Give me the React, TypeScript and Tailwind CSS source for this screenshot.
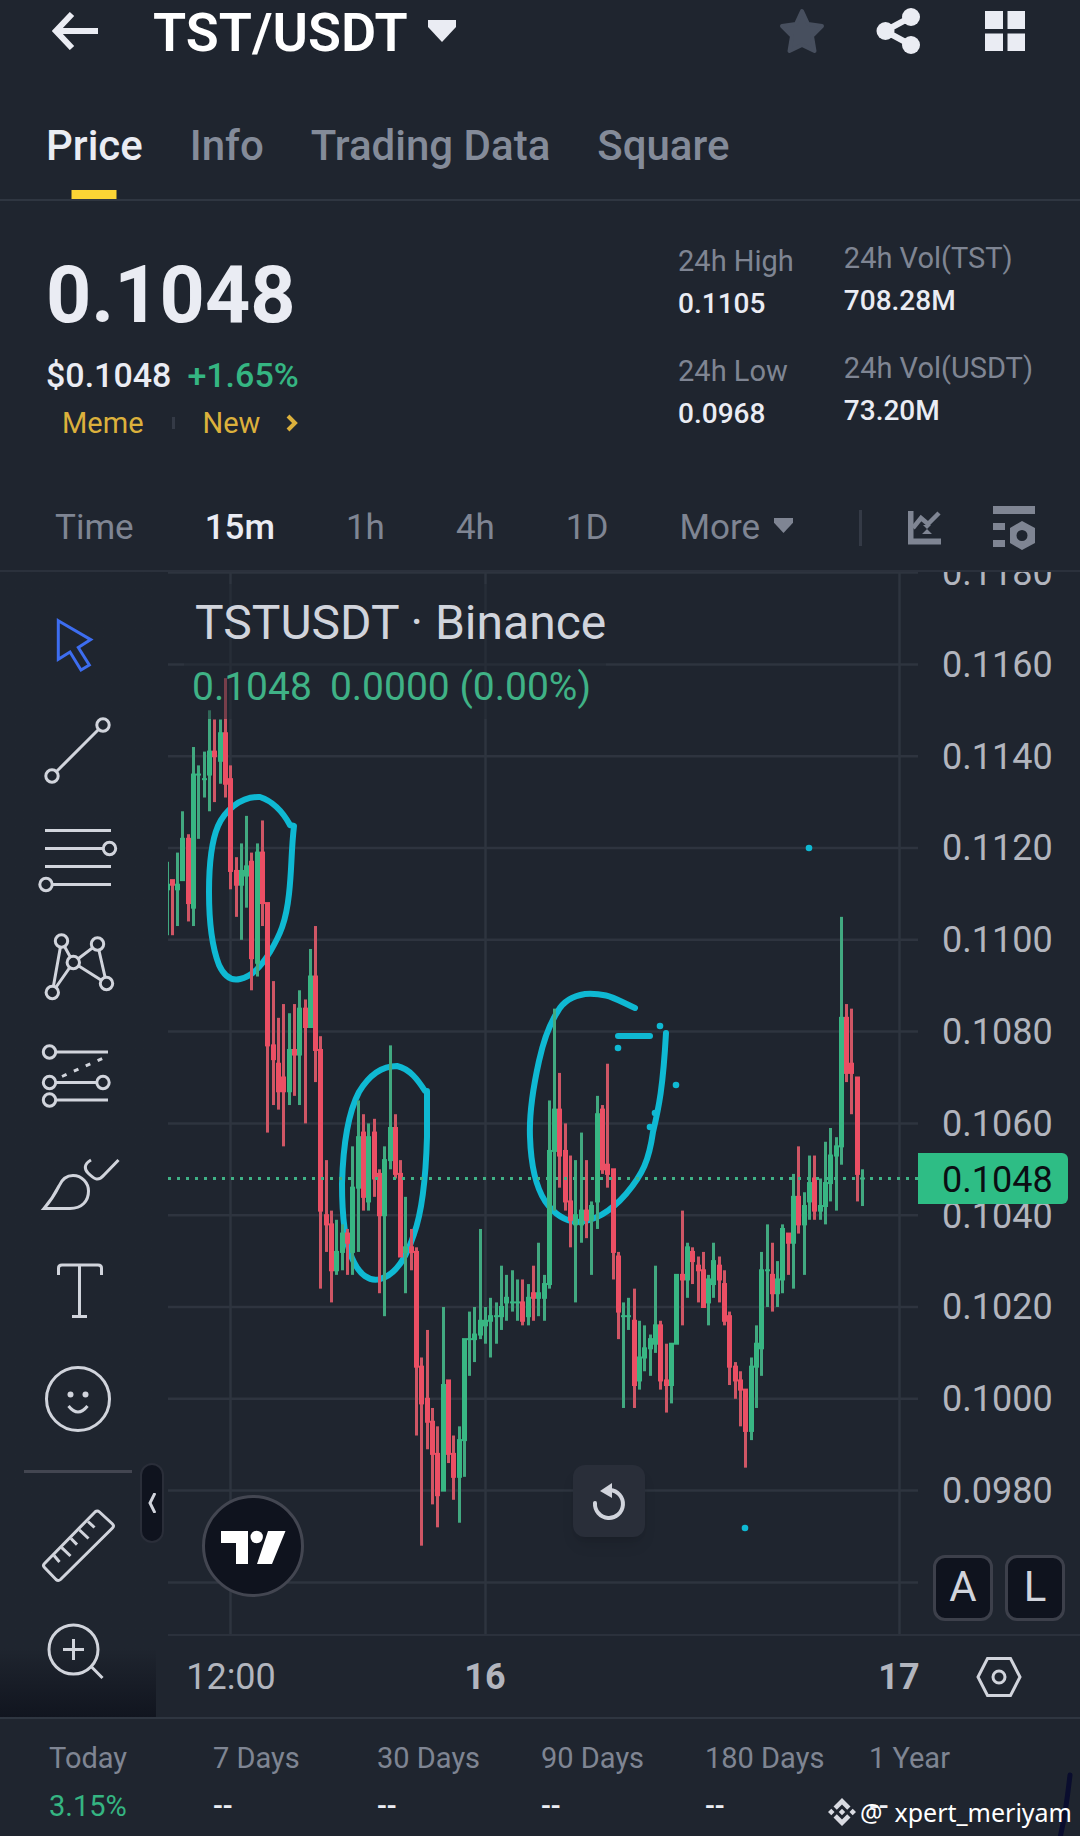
import { useState, type ReactNode } from "react";
import clsx from "clsx";

type Direction = "up" | "down";

// high, body top, body bottom, low (all in ticks of 0.0001)
type Candle = [Direction, number, number, number, number];

const CANDLES: Candle[] = [
  ["up", 1117, 1112, 1111, 1101],
  ["down", 1113, 1113, 1112, 1101],
  ["up", 1119, 1112, 1111, 1103],
  ["up", 1128, 1122, 1113, 1113],
  ["down", 1123, 1122, 1108, 1104],
  ["up", 1142, 1136, 1107, 1103],
  ["up", 1138, 1136, 1136, 1122],
  ["up", 1141, 1135, 1135, 1131],
  ["up", 1150, 1141, 1136, 1128],
  ["down", 1148, 1141, 1140, 1130],
  ["up", 1148, 1145, 1139, 1134],
  ["down", 1157, 1145, 1134, 1131],
  ["down", 1138, 1135, 1115, 1111],
  ["down", 1118, 1115, 1112, 1105],
  ["up", 1121, 1115, 1112, 1100],
  ["up", 1127, 1116, 1114, 1107],
  ["down", 1119, 1117, 1096, 1089],
  ["up", 1121, 1119, 1095, 1092],
  ["down", 1126, 1119, 1108, 1103],
  ["down", 1108, 1108, 1077, 1058],
  ["down", 1091, 1077, 1074, 1064],
  ["down", 1083, 1073, 1067, 1063],
  ["down", 1086, 1070, 1067, 1055],
  ["up", 1084, 1076, 1067, 1064],
  ["down", 1086, 1076, 1075, 1066],
  ["up", 1089, 1085, 1075, 1064],
  ["down", 1087, 1085, 1081, 1060],
  ["up", 1098, 1092, 1081, 1081],
  ["down", 1103, 1092, 1076, 1069],
  ["down", 1079, 1076, 1041, 1024],
  ["down", 1052, 1040, 1038, 1032],
  ["down", 1041, 1038, 1028, 1021],
  ["up", 1039, 1032, 1028, 1027],
  ["up", 1038, 1036, 1032, 1028],
  ["down", 1037, 1036, 1034, 1027],
  ["up", 1055, 1046, 1032, 1027],
  ["up", 1065, 1057, 1046, 1032],
  ["down", 1062, 1058, 1044, 1041],
  ["up", 1060, 1057, 1043, 1041],
  ["down", 1061, 1058, 1048, 1044],
  ["down", 1050, 1049, 1040, 1023],
  ["up", 1055, 1052, 1040, 1018],
  ["up", 1077, 1059, 1052, 1050],
  ["down", 1062, 1059, 1049, 1048],
  ["down", 1052, 1049, 1031, 1031],
  ["up", 1044, 1033, 1032, 1023],
  ["down", 1037, 1033, 1032, 1028],
  ["down", 1033, 1032, 1007, 992],
  ["down", 1009, 1007, 999, 968],
  ["down", 1015, 1000, 995, 989],
  ["down", 998, 995, 988, 977],
  ["down", 994, 988, 979, 972],
  ["up", 1020, 1003, 980, 980],
  ["down", 1004, 1004, 988, 986],
  ["down", 992, 988, 983, 978],
  ["up", 994, 991, 983, 973],
  ["up", 1013, 1013, 991, 983],
  ["up", 1019, 1013, 1013, 1005],
  ["up", 1020, 1014, 1013, 1008],
  ["up", 1037, 1017, 1014, 1013],
  ["up", 1020, 1017, 1016, 1012],
  ["up", 1022, 1018, 1017, 1009],
  ["up", 1021, 1018, 1018, 1012],
  ["up", 1029, 1020, 1018, 1015],
  ["up", 1027, 1022, 1021, 1017],
  ["up", 1028, 1021, 1021, 1019],
  ["up", 1026, 1021, 1021, 1017],
  ["down", 1026, 1021, 1017, 1016],
  ["up", 1025, 1022, 1018, 1016],
  ["down", 1029, 1023, 1022, 1017],
  ["up", 1034, 1023, 1022, 1018],
  ["up", 1027, 1025, 1022, 1017],
  ["up", 1065, 1054, 1025, 1024],
  ["up", 1085, 1063, 1054, 1041],
  ["down", 1071, 1063, 1053, 1046],
  ["down", 1060, 1054, 1043, 1041],
  ["down", 1053, 1043, 1039, 1033],
  ["up", 1052, 1040, 1038, 1021],
  ["up", 1058, 1041, 1038, 1034],
  ["down", 1052, 1041, 1039, 1035],
  ["up", 1043, 1042, 1039, 1027],
  ["up", 1066, 1062, 1043, 1037],
  ["down", 1064, 1063, 1050, 1049],
  ["down", 1073, 1051, 1049, 1046],
  ["down", 1050, 1050, 1032, 1026],
  ["down", 1032, 1031, 1019, 1013],
  ["up", 1021, 1018, 1018, 998],
  ["up", 1022, 1018, 1018, 1015],
  ["down", 1024, 1017, 1003, 998],
  ["up", 1017, 1009, 1004, 1002],
  ["up", 1016, 1011, 1009, 1006],
  ["up", 1014, 1013, 1011, 1005],
  ["up", 1029, 1016, 1012, 1010],
  ["down", 1017, 1016, 1004, 1002],
  ["down", 1012, 1004, 1003, 997],
  ["up", 1012, 1012, 1003, 999],
  ["up", 1027, 1027, 1012, 1012],
  ["down", 1041, 1027, 1026, 1016],
  ["up", 1034, 1033, 1026, 1022],
  ["down", 1033, 1032, 1030, 1025],
  ["down", 1031, 1029, 1028, 1021],
  ["down", 1032, 1028, 1020, 1020],
  ["up", 1027, 1026, 1021, 1016],
  ["up", 1034, 1030, 1025, 1022],
  ["down", 1031, 1029, 1026, 1021],
  ["down", 1028, 1025, 1017, 1016],
  ["down", 1019, 1018, 1007, 1003],
  ["down", 1008, 1007, 1004, 1000],
  ["down", 1006, 1004, 1002, 994],
  ["down", 1002, 1002, 993, 985],
  ["up", 1009, 1007, 993, 991],
  ["up", 1016, 1012, 1007, 998],
  ["up", 1032, 1028, 1011, 1005],
  ["up", 1038, 1028, 1028, 1020],
  ["down", 1034, 1027, 1023, 1019],
  ["up", 1030, 1026, 1023, 1020],
  ["up", 1038, 1037, 1026, 1023],
  ["down", 1036, 1036, 1034, 1027],
  ["up", 1049, 1044, 1034, 1024],
  ["down", 1055, 1044, 1038, 1036],
  ["up", 1045, 1042, 1038, 1027],
  ["up", 1053, 1047, 1043, 1039],
  ["down", 1053, 1048, 1041, 1039],
  ["up", 1048, 1042, 1041, 1039],
  ["up", 1056, 1047, 1042, 1038],
  ["up", 1059, 1053, 1047, 1043],
  ["up", 1057, 1055, 1053, 1041],
  ["up", 1105, 1083, 1055, 1051],
  ["down", 1086, 1083, 1071, 1069],
  ["down", 1085, 1073, 1071, 1062],
  ["down", 1070, 1070, 1049, 1043],
  ["up", 1050, 1048, 1048, 1042],
];

const PRICE_LABELS = [
  "0.1180", "0.1160", "0.1140", "0.1120", "0.1100", "0.1080",
  "0.1060", "0.1040", "0.1020", "0.1000", "0.0980",
];

const TABS = ["Price", "Info", "Trading Data", "Square"];
const INTERVALS = ["Time", "15m", "1h", "4h", "1D"];

const RETURNS = [
  { label: "Today", value: "3.15%" },
  { label: "7 Days", value: "--" },
  { label: "30 Days", value: "--" },
  { label: "90 Days", value: "--" },
  { label: "180 Days", value: "--" },
  { label: "1 Year", value: "--" },
];

const priceY = (ticks: number) => 276 + (1120 - ticks) * 4.59;
const candleX = (index: number) => -1.5 + index * 5.31;

function Caret({ className }: { className?: string }) {
  return (
    <svg viewBox="0 0 28 22" className={className} fill="currentColor" aria-hidden="true">
      <path d="M0 0H28V7L14 22L0 7Z" />
    </svg>
  );
}

function Header() {
  return (
    <header className="flex h-[62px] items-center pr-[55px] pl-[52px]">
      <button type="button" aria-label="Back" className="text-[#eaecf3]">
        <svg viewBox="0 0 46 38" className="h-[38px] w-[46px]" fill="none" stroke="currentColor" strokeWidth="6">
          <path d="M20 2L4 19L20 36M4 19H46" />
        </svg>
      </button>
      <button type="button" className="ml-[55px] flex items-center gap-[20px] text-white">
        <h1 className="pt-[4px] text-[54px] leading-[62px] font-semibold">TST/USDT</h1>
        <Caret className="h-[22px] w-[28px] text-[#eaecf3]" />
      </button>
      <div className="ml-auto flex items-center text-[#eaecf3]">
        <button type="button" aria-label="Favourite" className="text-[#474f5e]">
          <svg viewBox="0 0 46 46" className="h-[46px] w-[46px]" fill="currentColor" stroke="currentColor" strokeWidth="4" strokeLinejoin="round">
            <path d="M23 3L29 16L43 18L33 28L35.500 43L23 37L10.500 43L13 28L3 18L17 16Z" />
          </svg>
        </button>
        <button type="button" aria-label="Share" className="ml-[51px]">
          <svg viewBox="0 0 44 46" className="h-[46px] w-[44px]" fill="currentColor" stroke="currentColor">
            <path d="M9 23L35 9M9 23L35 37" strokeWidth="6" />
            <circle cx="9.500" cy="23" r="9" stroke="none" />
            <circle cx="35" cy="9" r="9" stroke="none" />
            <circle cx="35" cy="37" r="9" stroke="none" />
          </svg>
        </button>
        <button type="button" aria-label="Layout" className="ml-[65px]">
          <svg viewBox="0 0 40 40" className="h-[40px] w-[40px]" fill="currentColor">
            <path d="M0 0H18V18H0ZM22.500 0H40V18H22.500ZM0 22.500H18V40H0ZM22.500 22.500H40V40H22.500Z" />
          </svg>
        </button>
      </div>
    </header>
  );
}

function TabBar() {
  const [active, setActive] = useState("Price");
  return (
    <nav className="flex h-[139px] gap-[47px] border-b-2 border-[#2f3641] pl-[46px]">
      {TABS.map((tab) => (
        <button
          key={tab}
          type="button"
          onClick={() => setActive(tab)}
          className={clsx(
            "relative flex items-center pt-[30px] text-[42px] leading-[48px] font-medium",
            tab === active ? "text-[#eaecf3]" : "text-[#848b99]",
          )}
        >
          {tab}
          {tab === active && (
            <span className="absolute bottom-0 left-1/2 h-[9px] w-[45px] -translate-x-1/2 bg-[#fcd535]" />
          )}
        </button>
      ))}
    </nav>
  );
}

function Stat({ label, value }: { label: string; value: string }) {
  return (
    <div>
      <dt className="text-[29px] leading-[40px] text-[#7f8593]">{label}</dt>
      <dd className="mt-[3px] text-[28px] leading-[40px] font-medium text-[#eaecf3]">{value}</dd>
    </div>
  );
}

function Summary() {
  return (
    <section className="flex justify-between pr-[47px] pl-[46px]">
      <div className="pt-[54px] pb-[45px]">
        <div className="text-[79px] leading-[80px] font-bold text-[#eaecf3]">0.1048</div>
        <div className="mt-[20px] flex gap-[16px] text-[34px] leading-[40px] font-medium">
          <span className="text-[#eaecf3]">$0.1048</span>
          <span className="text-[#35b582]">+1.65%</span>
        </div>
        <div className="mt-[12px] flex items-center pl-[16px] text-[29px] leading-[32px] text-[#dcb13c]">
          <a href="#meme">Meme</a>
          <span className="mx-[28px] h-[12px] w-[3px] bg-[#343a46]" />
          <a href="#new" className="flex items-center gap-[26px]">
            New
            <svg viewBox="0 0 12 18" className="h-[18px] w-[12px]" fill="none" stroke="currentColor" strokeWidth="4">
              <path d="M2 2L9 9L2 16" />
            </svg>
          </a>
        </div>
      </div>
      <dl className="flex gap-[50px]">
        <div className="flex flex-col gap-[27px] pt-[40px]">
          <Stat label="24h High" value="0.1105" />
          <Stat label="24h Low" value="0.0968" />
        </div>
        <div className="flex flex-col gap-[27px] pt-[37px]">
          <Stat label="24h Vol(TST)" value="708.28M" />
          <Stat label="24h Vol(USDT)" value="73.20M" />
        </div>
      </dl>
    </section>
  );
}

function IntervalBar() {
  const [active, setActive] = useState("15m");
  return (
    <div className="flex h-[88px] items-center border-b-2 border-[#2b313c] pt-[2px] pr-[45px] pl-[55px] text-[35px] leading-[40px] text-[#7f8593]">
      <div className="flex gap-[71px]">
        {INTERVALS.map((interval) => (
          <button
            key={interval}
            type="button"
            onClick={() => setActive(interval)}
            className={clsx(interval === active && "font-medium text-[#eaecf3]")}
          >
            {interval}
          </button>
        ))}
        <button type="button" className="flex items-center gap-[14px]">
          More
          <Caret className="mb-[6px] h-[15px] w-[19px]" />
        </button>
      </div>
      <span className="ml-auto h-[36px] w-[3px] bg-[#343a46]" />
      <button type="button" aria-label="Indicators" className="ml-[46px]">
        <svg viewBox="0 0 33 34" className="h-[34px] w-[33px]" fill="none" stroke="currentColor">
          <path d="M2.500 0V30.500H33" strokeWidth="6" />
          <path d="M5 17L13 7L20 13L31 2" strokeWidth="4.500" />
          <path d="M15 14H23L19 18L24 23H14L19 18Z" fill="currentColor" stroke="none" />
        </svg>
      </button>
      <button type="button" aria-label="Chart settings" className="ml-[52px]">
        <svg viewBox="0 0 42 44" className="h-[44px] w-[42px]" fill="currentColor">
          <path d="M0 0H42V8H0ZM0 17H12V24H0ZM0 34H12V41H0Z" />
          <path fillRule="evenodd" d="M29 15L42 22V37L29 44L17 37V22ZM29 24A5.500 5.500 0 1 0 29 35A5.500 5.500 0 1 0 29 24Z" />
        </svg>
      </button>
    </div>
  );
}

function Tool({ label, active, children }: { label: string; active?: boolean; children: ReactNode }) {
  return (
    <button type="button" aria-label={label} className={clsx("block", active ? "text-[#3d6df0]" : "text-[#d1d4dc]")}>
      <svg viewBox="0 0 108 108" className="h-[108px] w-[108px]" fill="none" stroke="currentColor" strokeWidth="3">
        {children}
      </svg>
    </button>
  );
}

function Toolbar() {
  return (
    <aside className="relative w-[168px] shrink-0">
      <div className="h-full w-[156px] bg-linear-to-t from-[#11151f] to-[#1f252f] to-6% pt-[16px] pl-[24px]">
        <Tool label="Cursor" active>
          <path d="M34.300 32.700L66.700 51.600L54.300 59.500L65.300 77L57 82L46 64L34.300 71.300Z" />
        </Tool>
        <Tool label="Trend line">
          <circle cx="28" cy="80" r="6.200" />
          <circle cx="79" cy="29" r="6.200" />
          <path d="M32.500 75.500L74.500 33.500" />
        </Tool>
        <Tool label="Fib retracement">
          <path d="M21 26.500H87M21 44.500H79M21 62.500H87M28.500 80.500H87" />
          <circle cx="85.500" cy="44.500" r="6.200" />
          <circle cx="22" cy="80.500" r="6.200" />
        </Tool>
        <Tool label="Patterns">
          <path d="M28.300 80.500L37.500 29L49.300 50.500L73.500 32L82.500 71.500L49.300 50.500Z" />
          <g fill="#1f252f">
            <circle cx="37.500" cy="29" r="6.200" />
            <circle cx="73.500" cy="32" r="6.200" />
            <circle cx="49.300" cy="50.500" r="6.200" />
            <circle cx="28.300" cy="80.500" r="6.200" />
            <circle cx="82.500" cy="71.500" r="6.200" />
          </g>
        </Tool>
        <Tool label="Forecast">
          <path d="M32 32H84M32 62.500H73M32 80H84" />
          <path d="M38 56.500L80 37.700" strokeDasharray="5 8" />
          <circle cx="25.500" cy="32" r="6.200" />
          <circle cx="25.500" cy="62.500" r="6.200" />
          <circle cx="79" cy="62.500" r="6.200" />
          <circle cx="25.500" cy="80" r="6.200" />
        </Tool>
        <Tool label="Brush">
          <path d="M20 80.500C29 70 32 64 35 58C38 51 43 47.500 49 47.500C58 47.500 64.500 55 64.500 63C64.500 73 58 80.500 46 80.500Z" />
          <path d="M67 32C60 36 60 41 64 45C70 51 74 54 80 47L94.500 32" />
        </Tool>
        <Tool label="Text">
          <path d="M34.500 39V32Q34.500 29 38 29H74Q77.500 29 77.500 32V39M55.500 29V80.500M48 80.500H63" />
        </Tool>
        <Tool label="Icons">
          <circle cx="54" cy="55" r="31.500" />
          <circle cx="46.500" cy="50.500" r="3" fill="currentColor" stroke="none" />
          <circle cx="61.500" cy="50.500" r="3" fill="currentColor" stroke="none" />
          <path d="M44.500 62Q54 74 63.500 62" />
        </Tool>
        <div className="my-[18px] h-[3px] w-[108px] bg-[#434651]" />
        <Tool label="Measure">
          <path d="M20.500 76.500Q18.500 74.500 20.500 72.500L71 21Q73.300 19 75.500 21L88.500 33Q90.500 35 88.500 37L36.500 88.500Q34.300 90.500 32 88.500Z" />
          <path d="M30 64.500L35.500 71M37.700 56.600L46.500 65M47 47.500L53 53.600M55.500 39L64.500 47.500M64 30.500L70.500 36.500" />
        </Tool>
        <Tool label="Zoom in">
          <circle cx="49.500" cy="50.500" r="24.500" />
          <path d="M39 50.500H60M49.500 40V61M66.700 67L78.500 79" />
        </Tool>
      </div>
      <button
        type="button"
        aria-label="Hide toolbar"
        className="absolute top-[891px] left-[140px] flex h-[80px] w-[24px] items-center justify-center rounded-full border-2 border-[#2a2e39] bg-[#0f131e] text-[#d1d4dc]"
      >
        <svg viewBox="0 0 8 20" className="h-[20px] w-[8px] shrink-0" fill="none" stroke="currentColor" strokeWidth="3">
          <path d="M7 0L2 10L7 20" />
        </svg>
      </button>
    </aside>
  );
}

function ChartPane() {
  return (
    <div className="relative h-[1062px] min-w-0 flex-1">
      <svg viewBox="0 0 750 1062" className="h-full w-full" role="img" aria-label="TSTUSDT 15 minute candles">
        <g stroke="#2e343f" strokeWidth="2.500">
          {PRICE_LABELS.map((label, i) => (
            <path key={label} d={`M0 ${priceY(1180 - i * 20)}H750`} />
          ))}
          <path d={`M0 ${priceY(960)}H750`} />
          <path d="M62.500 0V1062M317.500 0V1062M731.500 0V1062" />
        </g>

        {/* freehand marks */}
        <g fill="none" stroke="#0fb9d3" strokeWidth="6" strokeLinecap="round" strokeLinejoin="round">
          <path d="M122 253C116 242 107 230 92 225C72 224 56 240 50 254C44 268 41 290 41 320C41 350 44 375 51 393C57 406 64 409 72 407C84 404 92 396 102 380C112 363 118 350 121 322C124 295 123 280 126 254L122 253" />
          <path d="M257 519C250 508 242 497 229 494C213 494 200 505 191 520C180 541 175 575 174 612C174 650 178 672 184 686C191 703 202 710 212 707C228 703 239 684 246 662C254 640 258 600 259 565L259 519Z" />
          <path d="M467 436C452 429 445 425 438 423.500C431 422 424 421.500 417 422C405 424 395 430 390 439C380 454 375 471 371 489C365 516 361 540 362 565C363 595 368 615 377 629C386 642 397 649 409 650C429 649 445 637 458 622C475 602 481 588 485 560C491 535 495 515 498 461" />
          <path d="M450 464H482" />
        </g>
        <g fill="#0fb9d3">
          <circle cx="492" cy="454" r="3.300" />
          <circle cx="450" cy="476" r="3.300" />
          <circle cx="508" cy="513" r="3.300" />
          <circle cx="487" cy="541" r="3.300" />
          <circle cx="482" cy="555" r="3.300" />
          <circle cx="641" cy="276" r="3.300" />
          <circle cx="577" cy="956" r="3.300" />
        </g>

        {CANDLES.map(([direction, high, top, bottom, low], i) => {
          const up = direction === "up";
          const x = Math.round(candleX(i));
          return (
            <g key={i}>
              <rect x={x - 1} y={priceY(high)} width={3} height={priceY(low) - priceY(high)} fill={up ? "#41a980" : "#cf5665"} />
              <rect
                x={x - 2}
                y={priceY(top) - 1}
                width={5}
                height={priceY(bottom) - priceY(top) + 2}
                fill={up ? "#38b683" : "#eb4f64"}
              />
            </g>
          );
        })}
        <path d={`M0 ${priceY(1048)}H750`} stroke="#3fb286" strokeWidth="3" strokeDasharray="3 6" />
      </svg>

      <div className="absolute top-[12px] left-[16px] bg-[#1f252f]/50 pt-[7px] pl-[8px] whitespace-nowrap">
        <div className="pl-[3px] text-[48px] leading-[64px] text-[#d1d4dc]">TSTUSDT · Binance</div>
        <div className="flex gap-[18px] text-[39px] leading-[64px] text-[#3fb286]">
          <span>0.1048</span>
          <span>0.0000 (0.00%)</span>
        </div>
      </div>

      <a href="#tradingview" aria-label="TradingView" className="absolute top-[923px] left-[34px]">
        <svg viewBox="0 0 102 102" className="h-[102px] w-[102px]">
          <circle cx="51" cy="51" r="49.500" fill="#0f131e" stroke="#434651" strokeWidth="3" />
          <path d="M19 36H46V69H34V48H19ZM66 36H83.500L70 69H55Z" fill="white" />
          <circle cx="54.700" cy="42" r="6.200" fill="white" />
        </svg>
      </a>
      <button
        type="button"
        aria-label="Reset chart"
        className="absolute top-[893px] left-[405px] rounded-xl bg-[#292e39] text-[#d1d4dc] shadow-lg"
      >
        <svg viewBox="0 0 72 72" className="h-[72px] w-[72px]" fill="none" stroke="currentColor" strokeWidth="4">
          <path d="M22 38A14 14 0 1 0 37 25" strokeLinecap="round" />
          <path d="M27 26L39 18V33Z" fill="currentColor" stroke="none" />
        </svg>
      </button>
    </div>
  );
}

function PriceAxis() {
  return (
    <div className="relative h-[1062px] w-[162px] shrink-0 overflow-hidden">
      <ol className="-mt-[45px] flex h-[1010px] flex-col pl-[24px] text-[36px] text-[#b2b5be]">
        {PRICE_LABELS.map((label) => (
          <li key={label} className="flex flex-1 items-center">
            {label}
          </li>
        ))}
      </ol>
      <div className="mt-[18px] flex gap-[12px] pl-[15px] text-[42px] text-[#d1d4dc]">
        {["A", "L"].map((mode) => (
          <button
            key={mode}
            type="button"
            className="flex h-[66px] w-[60px] items-center justify-center rounded-xl border-3 border-[#3d404b] bg-[#0f131e] pb-[4px]"
          >
            {mode}
          </button>
        ))}
      </div>
      <div className="absolute top-[581px] left-0 flex h-[51px] w-[150px] items-center rounded-r-md bg-[#2ebd85] pt-[2px] pl-[24px] text-[36px] text-[#0b0e13]">
        0.1048
      </div>
    </div>
  );
}

function TimeAxis() {
  return (
    <div className="grid h-[83px] grid-cols-[126px_382px_1fr_38px_162px] items-center justify-items-center border-t-2 border-[#2b313c] text-[36px] text-[#b2b5be]">
      <span>12:00</span>
      <span className="font-bold">16</span>
      <span />
      <span className="font-bold">17</span>
      <button type="button" aria-label="Scale settings" className="text-[#d1d4dc]">
        <svg viewBox="0 0 46 40" className="h-[40px] w-[46px]" fill="none" stroke="currentColor" strokeWidth="3">
          <path d="M11.500 1.500H34.500L44 20L34.500 38.500H11.500L2 20Z" />
          <circle cx="23" cy="20" r="6" />
        </svg>
      </button>
    </div>
  );
}

function ReturnsTable() {
  return (
    <footer className="relative overflow-hidden border-t-2 border-[#2f3641] pt-[19px] pb-[10px] pl-[49px]">
      <table className="w-full table-fixed text-left text-[29px]">
        <thead className="text-[#7f8593]">
          <tr>
            {RETURNS.map(({ label }) => (
              <th key={label} className="w-[164px] pb-[8px] leading-[40px] font-normal whitespace-nowrap last:w-auto">
                {label}
              </th>
            ))}
          </tr>
        </thead>
        <tbody>
          <tr>
            {RETURNS.map(({ label, value }) => (
              <td key={label} className={clsx("leading-[40px]", value === "--" ? "font-medium text-[#eaecf3]" : "text-[#35b582]")}>
                {value}
              </td>
            ))}
          </tr>
        </tbody>
      </table>
      <svg viewBox="0 0 16 64" className="absolute right-[6px] bottom-0 h-[64px] w-[16px]" fill="none" stroke="#0a0d2e" strokeWidth="5" strokeLinecap="round">
        <path d="M12 3C10 20 8 40 2 66" />
      </svg>
      <div className="absolute right-[8px] bottom-[6px] flex items-center font-['Noto_Sans'] text-[25px] leading-[36px] text-white">
        <svg viewBox="0 0 28 28" className="mr-[4px] h-[28px] w-[28px]" fill="#d9dbe2" aria-hidden="true">
          <path d="M14 0L22.500 8.500L19.200 11.800L14 6.600L8.800 11.800L5.500 8.500ZM14 28L22.500 19.500L19.200 16.200L14 21.400L8.800 16.200L5.500 19.500ZM14 10.800L17.200 14L14 17.200L10.800 14ZM3.300 10.800L6.500 14L3.300 17.200L0 14ZM24.700 10.800L28 14L24.700 17.200L21.500 14Z" />
        </svg>
        <span className="mr-[12px]">@</span>
        <span>xpert_meriyam</span>
      </div>
    </footer>
  );
}

export default function App() {
  return (
    <main className="min-h-screen bg-[#1f252f] font-[Roboto,sans-serif]">
      <Header />
      <TabBar />
      <Summary />
      <IntervalBar />
      <div className="flex">
        <Toolbar />
        <div className="min-w-0 flex-1">
          <div className="flex">
            <ChartPane />
            <PriceAxis />
          </div>
          <TimeAxis />
        </div>
      </div>
      <ReturnsTable />
    </main>
  );
}
